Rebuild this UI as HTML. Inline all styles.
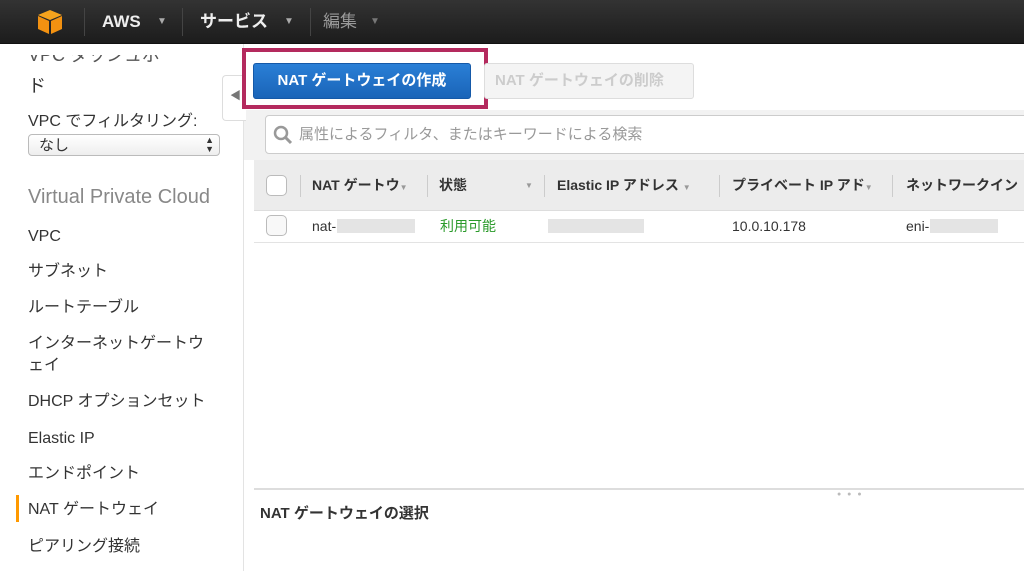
<!DOCTYPE html><html><head><meta charset="utf-8"><style>
*{box-sizing:border-box;margin:0;padding:0}
body{width:1024px;height:571px;overflow:hidden;font-family:"Liberation Sans","Noto Sans CJK JP",sans-serif;background:#fff;position:relative;color:#333}
.a{position:absolute;white-space:nowrap;line-height:1.25}
#hd{left:0;top:0;width:1024px;height:44px;background:linear-gradient(#333,#1c1c1c);border-bottom:1px solid #111}
.sep{top:8px;width:1px;height:28px;background:#444}
.nav{top:11px;font-size:17px;font-weight:bold;color:#eee}
.car{font-size:10px;color:#aaa;top:16px}
.si{left:28px;font-size:16px;color:#333}
</style></head><body>
<div id="hd" class="a"></div>
<svg class="a" style="left:37px;top:9px" width="26" height="26" viewBox="0 0 26 26"><polygon points="13,1 25,6 13,11 1,6" fill="#f7a41d"/><polygon points="1,7 12,12 12,25 1,20" fill="#f29111"/><polygon points="14,12 25,7 25,20 14,25" fill="#f29111"/></svg>
<div class="a sep" style="left:84px"></div>
<div class="a nav" style="left:102px">AWS</div><div class="a car" style="left:157px">▼</div>
<div class="a sep" style="left:182px"></div>
<div class="a nav" style="left:200px">サービス</div><div class="a car" style="left:284px">▼</div>
<div class="a sep" style="left:310px"></div>
<div class="a nav" style="left:323px;color:#999;font-weight:normal">編集</div><div class="a car" style="left:370px;color:#777">▼</div>

<div class="a" style="left:243px;top:44px;width:1px;height:527px;background:#e3e3e3"></div>
<div class="a" style="left:28px;top:55px;height:10px;overflow:hidden;width:200px"><div style="font-size:18px;color:#555;margin-top:-11px;line-height:22px">VPC ダッシュボー</div></div>
<div class="a si" style="top:75px;font-size:18px">ド</div>
<div class="a si" style="top:112px">VPC でフィルタリング:</div>
<div class="a" style="left:28px;top:134px;width:192px;height:22px;border:1px solid #bbb;border-radius:4px;background:linear-gradient(#fff,#eee);font-size:15px;padding:0 10px;line-height:21px">なし<span style="position:absolute;right:5px;top:1px;font-size:9px;line-height:9px">▲<br>▼</span></div>
<div class="a si" style="top:185px;font-size:20px;color:#888">Virtual Private Cloud</div>
<div class="a si" style="top:227px">VPC</div>
<div class="a si" style="top:262px">サブネット</div>
<div class="a si" style="top:298px">ルートテーブル</div>
<div class="a si" style="top:334px">インターネットゲートウ</div>
<div class="a si" style="top:356px">ェイ</div>
<div class="a si" style="top:392px">DHCP オプションセット</div>
<div class="a si" style="top:429px">Elastic IP</div>
<div class="a si" style="top:464px">エンドポイント</div>
<div class="a" style="left:16px;top:495px;width:3px;height:27px;background:#f90"></div>
<div class="a si" style="top:500px">NAT ゲートウェイ</div>
<div class="a si" style="top:537px">ピアリング接続</div>

<div class="a" style="left:244px;top:110px;width:780px;height:50px;background:#f2f2f2"></div>
<div class="a" style="left:222px;top:75px;width:24px;height:46px;background:#fff;border:1px solid #ddd;border-right:none;border-radius:4px 0 0 4px;font-size:11px;color:#777;padding:14px 0 0 7px">◀</div>
<div class="a" style="left:242px;top:48px;width:246px;height:61px;border:4px solid #b42a5e"></div>
<div class="a" style="left:253px;top:63px;width:218px;height:36px;background:linear-gradient(#2a7fd6,#1a64b8);border:1px solid #1559a8;border-radius:3px;color:#fff;font-size:15px;font-weight:bold;text-align:center;line-height:34px">NAT ゲートウェイの作成</div>
<div class="a" style="left:484px;top:63px;width:210px;height:36px;background:#f4f4f4;border:1px solid #ddd;border-radius:3px;color:#ccc;font-size:15px;font-weight:bold;line-height:34px;padding-left:10px">NAT ゲートウェイの削除</div>
<div class="a" style="left:265px;top:115px;width:770px;height:39px;background:#fff;border:1px solid #ccc;border-radius:4px"></div>
<svg class="a" style="left:273px;top:125px" width="20" height="20"><circle cx="8" cy="8" r="6" stroke="#999" stroke-width="2.5" fill="none"/><line x1="12" y1="12" x2="18" y2="18" stroke="#999" stroke-width="3"/></svg>
<div class="a" style="left:299px;top:126px;font-size:15px;color:#999">属性によるフィルタ、またはキーワードによる検索</div>

<div class="a" style="left:254px;top:160px;width:770px;height:51px;background:#ececec;border-bottom:1px solid #ddd"></div>
<div class="a" style="left:266px;top:175px;width:21px;height:21px;border:1px solid #bbb;border-radius:5px;background:#fff"></div>
<div class="a" style="left:266px;top:215px;width:21px;height:21px;border:1px solid #bbb;border-radius:5px;background:#f8f8f8"></div>
<div class="a" style="left:300px;top:175px;width:1px;height:22px;background:#ccc"></div>
<div class="a" style="left:427px;top:175px;width:1px;height:22px;background:#ccc"></div>
<div class="a" style="left:544px;top:175px;width:1px;height:22px;background:#ccc"></div>
<div class="a" style="left:719px;top:175px;width:1px;height:22px;background:#ccc"></div>
<div class="a" style="left:892px;top:175px;width:1px;height:22px;background:#ccc"></div>
<div style="font-size:14px;font-weight:bold;color:#333">
<div class="a" style="left:312px;top:177px">NAT ゲートウ<span style="font-size:8px;color:#999">▼</span></div>
<div class="a" style="left:439px;top:177px">状態</div><div class="a" style="left:525px;top:181px;font-size:8px;color:#999">▼</div>
<div class="a" style="left:557px;top:177px">Elastic IP アドレス <span style="font-size:8px;color:#999">▼</span></div>
<div class="a" style="left:732px;top:177px">プライベート IP アド<span style="font-size:8px;color:#999">▼</span></div>
<div class="a" style="left:906px;top:177px">ネットワークイン</div>
</div>
<div style="font-size:14px">
<div class="a" style="left:312px;top:218px">nat-</div><div class="a" style="left:337px;top:219px;width:78px;height:14px;background:#d8d8d8;opacity:.7"></div>
<div class="a" style="left:440px;top:218px;color:#2a9a2a">利用可能</div>
<div class="a" style="left:548px;top:219px;width:96px;height:14px;background:#d8d8d8;opacity:.7"></div>
<div class="a" style="left:732px;top:218px">10.0.10.178</div>
<div class="a" style="left:906px;top:218px">eni-</div><div class="a" style="left:930px;top:219px;width:68px;height:14px;background:#d8d8d8;opacity:.7"></div>
</div>
<div class="a" style="left:254px;top:242px;width:770px;height:1px;background:#e3e3e3"></div>
<div class="a" style="left:254px;top:488px;width:770px;height:2px;background:#ddd"></div>
<div class="a" style="left:837px;top:491px;font-size:7px;color:#bbb;letter-spacing:2px">● ● ●</div>
<div class="a" style="left:260px;top:505px;font-size:15px;font-weight:bold">NAT ゲートウェイの選択</div>
</body></html>
